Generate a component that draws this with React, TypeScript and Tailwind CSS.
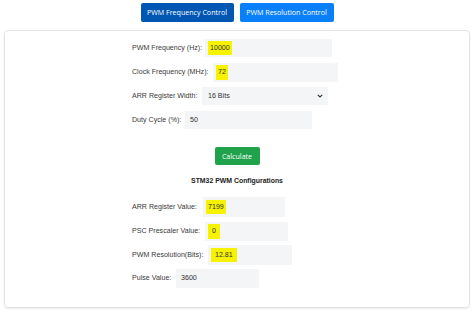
import React from "react";

const font = { fontFamily: '"Liberation Sans", Arial, sans-serif' };

function Hl({ children }: { children: React.ReactNode }) {
  return <span className="bg-[#f7f300] px-[2px] py-[2px]">{children}</span>;
}

function Row({
  label,
  labelW,
  inputW,
  h,
  children,
  mt,
}: {
  label: string;
  labelW: string;
  inputW: string;
  h: string;
  children: React.ReactNode;
  mt: string;
}) {
  return (
    <div className={`flex items-center ${mt}`}>
      <div className={`${labelW} shrink-0 text-[7.1px] text-[#3a3a3a]`}>{label}</div>
      <div className={`${inputW} ${h} flex items-center bg-[#f4f5f7] pl-[3px] text-[7.1px] text-[#333]`}>
        {children}
      </div>
    </div>
  );
}

export default function App() {
  return (
    <div className="w-[474px] h-[315px] bg-white overflow-hidden" style={font}>
      <div className="flex justify-center gap-[6px] pt-[3px]">
        <div
          className="w-[93px] h-[19px] rounded-[2px] bg-[#0056b3] text-white text-[7.1px] flex items-center justify-center"
          style={{ fontFamily: '"Open Sans", "Noto Sans", sans-serif' }}
        >
          PWM Frequency Control
        </div>
        <div
          className="w-[94px] h-[19px] rounded-[2px] bg-[#0a7ffa] text-white text-[7.1px] flex items-center justify-center"
          style={{ fontFamily: '"Open Sans", "Noto Sans", sans-serif' }}
        >
          PWM Resolution Control
        </div>
      </div>
      <div className="mx-[4px] mt-[8px] h-[278px] rounded-[4px] border border-[#e3e3e3] shadow-[0_1px_2px_rgba(0,0,0,0.08)] flex flex-col pl-[127px] pt-[8px]">
        <Row label="PWM Frequency (Hz):" labelW="w-[73px]" inputW="w-[127px]" h="h-[18px]" mt="">
          <Hl>10000</Hl>
        </Row>
        <Row label="Clock Frequency (MHz):" labelW="w-[81px]" inputW="w-[125px]" h="h-[19px]" mt="mt-[6px]">
          <Hl>72</Hl>
        </Row>
        <div className="flex items-center mt-[5px]">
          <div className="w-[70px] shrink-0 text-[7.1px] text-[#3a3a3a]">ARR Register Width:</div>
          <div className="w-[126px] h-[18px] flex items-center justify-between bg-[#f4f5f7] pl-[6px] pr-[5px] text-[7.1px] text-[#333]">
            <span>16 Bits</span>
            <svg width="6" height="4" viewBox="0 0 6 4">
              <path d="M0.8 0.8 L3 3 L5.2 0.8" stroke="#333" strokeWidth="1.1" fill="none" />
            </svg>
          </div>
        </div>
        <Row label="Duty Cycle (%):" labelW="w-[53px]" inputW="w-[127px]" h="h-[18px]" mt="mt-[6px]">
          <span className="pl-[2px]">50</span>
        </Row>
        <div className="flex justify-center mt-[18px] -ml-[127px]">
          <div
            className="w-[45px] h-[18px] rounded-[2px] bg-[#1fa24b] text-white text-[7.1px] flex items-center justify-center"
            style={{ fontFamily: '"Open Sans", "Noto Sans", sans-serif' }}
          >
            Calculate
          </div>
        </div>
        <div className="-ml-[127px] mt-[10px] h-[12px] flex items-center justify-center text-[6.9px] font-bold text-[#222]">
          STM32 PWM Configurations
        </div>
        <Row label="ARR Register Value:" labelW="w-[71px]" inputW="w-[82px]" h="h-[20px]" mt="mt-[10px]">
          <Hl>7199</Hl>
        </Row>
        <Row label="PSC Prescaler Value:" labelW="w-[73px]" inputW="w-[83px]" h="h-[19px]" mt="mt-[5px]">
          <Hl>&nbsp;0&nbsp;</Hl>
        </Row>
        <Row label="PWM Resolution(Bits):" labelW="w-[76px]" inputW="w-[84px]" h="h-[20px]" mt="mt-[4px]">
          <Hl>&nbsp;12.81&nbsp;</Hl>
        </Row>
        <Row label="Pulse Value:" labelW="w-[44px]" inputW="w-[83px]" h="h-[19px]" mt="mt-[4px]">
          <span className="pl-[2px]">3600</span>
        </Row>
      </div>
    </div>
  );
}
